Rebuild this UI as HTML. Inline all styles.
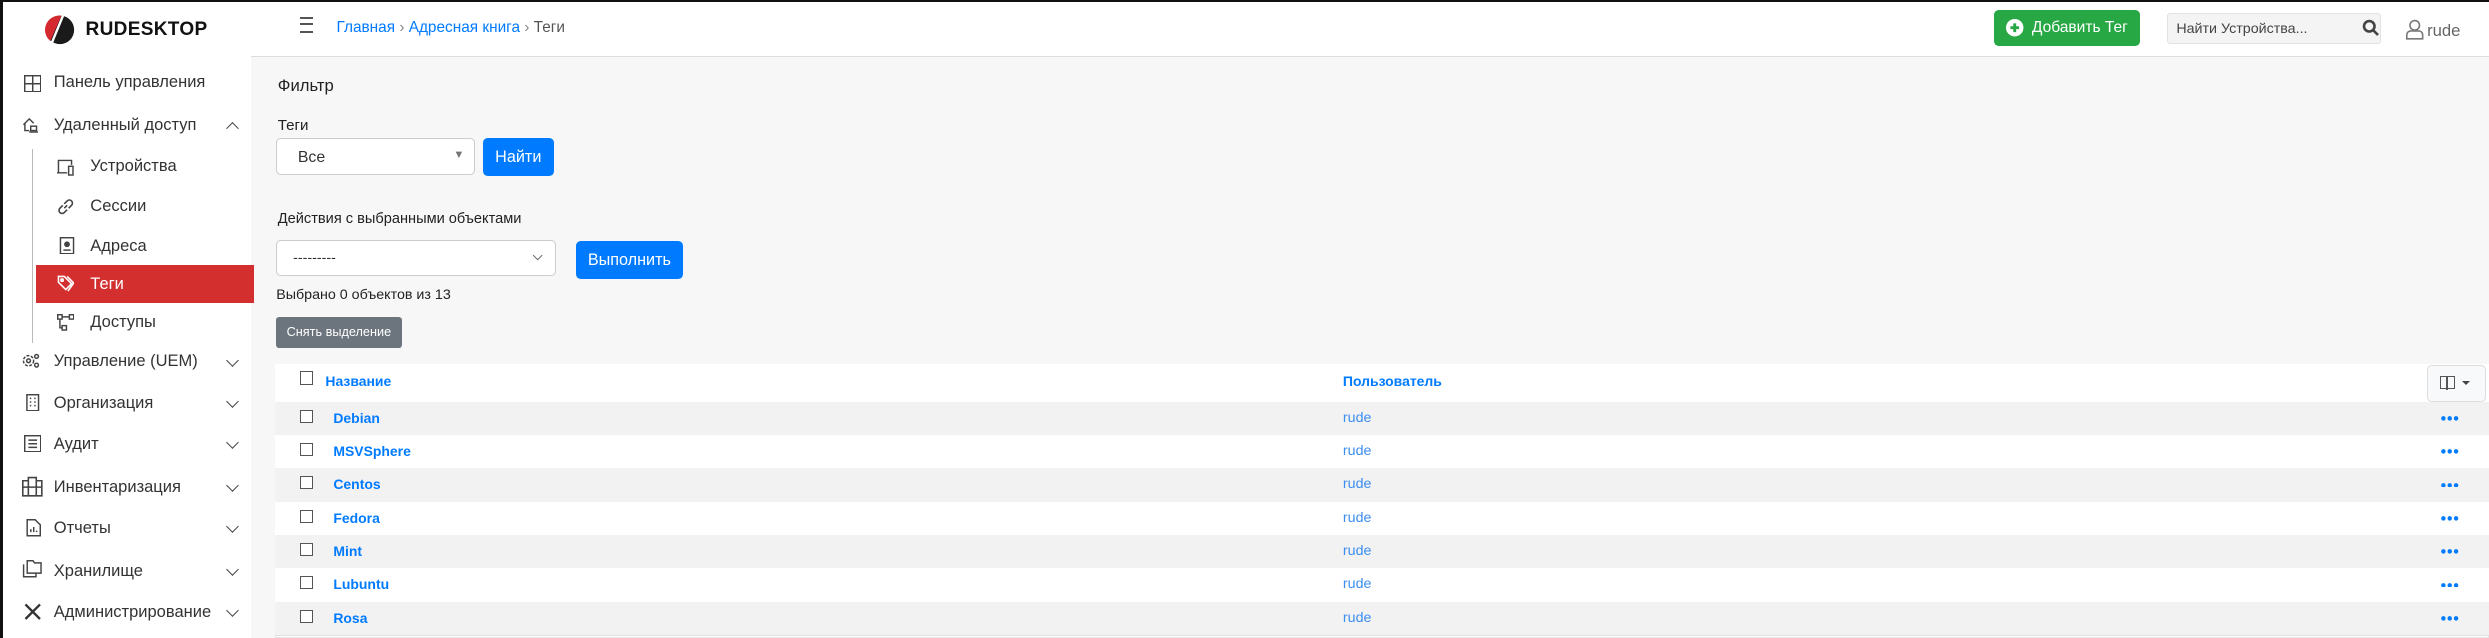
<!DOCTYPE html>
<html><head><meta charset="utf-8">
<style>
html,body{margin:0;padding:0;}
body{width:2489px;height:637px;overflow:hidden;background:#f7f7f7;font-family:"Liberation Sans","DejaVu Sans",sans-serif;}
#z{zoom:1.5874;width:1568px;height:402px;position:relative;overflow:hidden;background:#f7f7f7;}
.a{position:absolute;white-space:nowrap;}
#sb{position:absolute;left:0;top:0;width:158px;height:402px;background:#fff;border-left:2px solid #111;box-sizing:border-box;}
#top{position:absolute;left:158px;top:0;right:0;height:35px;background:#fff;border-bottom:1px solid #ddd;}
.ni{font-size:10.4px;color:#333;margin-top:1px;}
.ic{position:absolute;width:11px;height:11px;}
.chev{position:absolute;left:142px;width:5px;height:5px;border-right:1.2px solid #444;border-bottom:1.2px solid #444;transform:rotate(45deg);}
.chevu{transform:rotate(-135deg);}
.btnb{position:absolute;background:#007bff;color:#fff;border-radius:3px;font-size:10.2px;text-align:center;}
.sel{position:absolute;background:#fff;border:1px solid #ccc;border-radius:3px;font-size:10px;color:#333;box-sizing:border-box;}
.row{position:absolute;left:173px;width:1395px;height:21px;border-bottom:1px solid #e0e0e0;}
.cb{position:absolute;left:16px;top:5px;width:7px;height:7px;border:1px solid #555;background:#fff;}
.nm{position:absolute;left:37px;top:5px;font-size:8.8px;font-weight:bold;color:#007bff;}
.us{position:absolute;left:673px;top:5px;font-size:9px;color:#3b8ef0;}
.dots{position:absolute;left:1365px;top:9px;width:11px;height:3px;}
</style></head><body><div id="z">
<div style="position:absolute;left:0;top:0;width:1568px;height:1px;background:#111;z-index:5"></div>
<div id="sb">
 <svg class="a" style="left:26px;top:9px" width="20" height="20" viewBox="0 0 20 20"><circle cx="10" cy="10" r="9" fill="#1a1a1a"/><path d="M10 1A9 9 0 0 0 4 17L11 1Z" fill="#d42a2f"/><path d="M12 1L5 18" stroke="#fff" stroke-width="1.5"/></svg>
 <div class="a" style="left:52px;top:12px;font-size:12px;font-weight:bold;color:#111;letter-spacing:0.2px">RUDESKTOP</div>

 <svg class="ic" style="left:13px;top:47px" viewBox="0 0 12 12" fill="none" stroke="#444" stroke-width="1"><rect x="0.5" y="0.5" width="11" height="11"/><path d="M6 0.5V11.5M0.5 6H11.5"/></svg>
 <div class="a ni" style="left:32px;top:45px">Панель управления</div>
 <svg class="ic" style="left:12px;top:73px" viewBox="0 0 12 12" fill="none" stroke="#444" stroke-width="1"><path d="M1 6L5 2L8 5M2 5V10H5"/><rect x="6" y="7" width="4" height="3"/><path d="M5 11H11"/></svg>
 <div class="a ni" style="left:32px;top:72px">Удаленный доступ</div>
 <div class="chev chevu" style="top:78px"></div>
 <div style="position:absolute;left:18px;top:94px;width:1px;height:122px;background:#bbb"></div>

 <svg class="ic" style="left:34px;top:100px" viewBox="0 0 12 12" fill="none" stroke="#444" stroke-width="1"><path d="M1 9V1H10V4M0 9.5H7"/><rect x="8" y="5" width="3" height="6"/></svg>
 <div class="a ni" style="left:55px;top:98px">Устройства</div>
 <svg class="ic" style="left:34px;top:125px" viewBox="0 0 12 12" fill="none" stroke="#444" stroke-width="1.1"><path d="M5 7L7 5M4 5L2 7A2 2 0 0 0 5 10L7 8M8 7L10 5A2 2 0 0 0 7 2L5 4"/></svg>
 <div class="a ni" style="left:55px;top:123px">Сессии</div>
 <svg class="ic" style="left:35px;top:149px" viewBox="0 0 12 12" fill="none" stroke="#444" stroke-width="1"><rect x="1" y="0.5" width="9" height="11"/><circle cx="5.5" cy="5" r="1.5" fill="#444"/><path d="M3 9H8"/></svg>
 <div class="a ni" style="left:55px;top:148px">Адреса</div>
 <div style="position:absolute;left:21px;top:167px;width:137px;height:24px;background:#d32f2f"></div>
 <svg class="ic" style="left:34px;top:173px" viewBox="0 0 12 12" fill="none" stroke="#fff" stroke-width="1.1"><path d="M1 1H5L10 6L6 10L1 5Z"/><circle cx="3.5" cy="3.5" r="0.8"/><path d="M7 1L11.5 5.5L7.5 11"/></svg>
 <div class="a ni" style="left:55px;top:172px;color:#fff">Теги</div>
 <svg class="ic" style="left:34px;top:198px" viewBox="0 0 12 12" fill="none" stroke="#444" stroke-width="1"><rect x="0.5" y="0.5" width="3" height="3"/><rect x="8.5" y="0.5" width="3" height="3"/><rect x="3.5" y="8" width="3" height="3"/><path d="M2 3.5V9.5H3.5M3.5 2H8.5"/></svg>
 <div class="a ni" style="left:55px;top:196px">Доступы</div>

 <svg class="ic" style="left:12px;top:222px" viewBox="0 0 12 12" fill="none" stroke="#444" stroke-width="1"><circle cx="4.5" cy="6" r="3.5" stroke-dasharray="2 1"/><circle cx="4.5" cy="6" r="1.3"/><circle cx="10" cy="3" r="1.3"/><circle cx="10" cy="9" r="1.3"/></svg>
 <div class="a ni" style="left:32px;top:221px">Управление (UEM)</div><div class="chev" style="top:224px"></div>
 <svg class="ic" style="left:13px;top:248px" viewBox="0 0 12 12" fill="none" stroke="#444" stroke-width="1"><rect x="2" y="0.5" width="8" height="11"/><path d="M4 3H5M7 3H8M4 5.5H5M7 5.5H8M4 8H5M7 8H8"/></svg>
 <div class="a ni" style="left:32px;top:247px">Организация</div><div class="chev" style="top:250px"></div>
 <svg class="ic" style="left:13px;top:274px" viewBox="0 0 12 12" fill="none" stroke="#444" stroke-width="1"><rect x="0.5" y="0.5" width="11" height="11"/><path d="M3 3.5H9M3 6H9M3 8.5H9"/></svg>
 <div class="a ni" style="left:32px;top:273px">Аудит</div><div class="chev" style="top:276px"></div>
 <svg class="ic" style="left:12px;top:300px;width:13px;height:13px" viewBox="0 0 13 13" fill="none" stroke="#444" stroke-width="1"><path d="M0.5 12.5V3H4V1H9V3H12.5V12.5ZM0.5 7H12.5M4 3V12.5M9 3V12.5"/></svg>
 <div class="a ni" style="left:32px;top:300px">Инвентаризация</div><div class="chev" style="top:303px"></div>
 <svg class="ic" style="left:14px;top:327px" viewBox="0 0 12 12" fill="none" stroke="#444" stroke-width="1"><path d="M1.5 0.5H7L10.5 4V11.5H1.5Z"/><path d="M4 9V7M6 9V5.5M8 9V8"/></svg>
 <div class="a ni" style="left:32px;top:326px">Отчеты</div><div class="chev" style="top:329px"></div>
 <svg class="ic" style="left:12px;top:353px;width:13px" viewBox="0 0 13 12" fill="none" stroke="#444" stroke-width="1"><path d="M0.5 3V11.5H9V9M3 0.5H7L8 2H12.5V9H3Z"/></svg>
 <div class="a ni" style="left:32px;top:353px">Хранилище</div><div class="chev" style="top:356px"></div>
 <svg class="ic" style="left:13px;top:380px" viewBox="0 0 12 12" fill="none" stroke="#333" stroke-width="1.6"><path d="M1 1L11 11M11 1L1 11"/></svg>
 <div class="a ni" style="left:32px;top:379px">Администрирование</div><div class="chev" style="top:382px"></div>
</div>

<div id="top">
 <div class="a" style="left:31px;top:11px;width:8px;height:7px;border-top:1.5px solid #555;border-bottom:1.5px solid #555"></div>
 <div class="a" style="left:31px;top:14.5px;width:8px;height:1.5px;background:#555"></div>
 <div class="a" style="left:54px;top:12px;font-size:9.7px;color:#007bff">Главная <span style="color:#888">›</span> Адресная книга <span style="color:#888">›</span> <span style="color:#555">Теги</span></div>
 <div class="a" style="left:1098px;top:6px;width:92px;height:23px;background:#28a745;border-radius:3px"></div>
 <svg class="a" style="left:1106px;top:12px" width="11" height="11" viewBox="0 0 12 12"><circle cx="6" cy="6" r="6" fill="#fff"/><path d="M6 3V9M3 6H9" stroke="#28a745" stroke-width="2"/></svg>
 <div class="a" style="left:1122px;top:12px;font-size:9.8px;color:#fff">Добавить Тег</div>
 <div class="a" style="left:1207px;top:8px;width:135px;height:20px;background:#f4f4f4;border:1px solid #e2e2e2;border-radius:2px;box-sizing:border-box"></div>
 <div class="a" style="left:1213px;top:13px;font-size:9px;color:#444">Найти Устройства...</div>
 <svg class="a" style="left:1330px;top:12px" width="11" height="11" viewBox="0 0 12 12" fill="none" stroke="#444" stroke-width="1.8"><circle cx="5" cy="5" r="3.6"/><path d="M7.6 7.6L11 11"/></svg>
 <svg class="a" style="left:1358px;top:12px" width="11" height="13" viewBox="0 0 11 13" fill="none" stroke="#777" stroke-width="1"><circle cx="5.5" cy="4" r="3"/><path d="M0.5 12.5V10A2.5 2.5 0 0 1 3 7.5H8A2.5 2.5 0 0 1 10.5 10V12.5Z"/></svg>
 <div class="a" style="left:1371px;top:13px;font-size:10.5px;color:#666">rude</div>
</div>

<div class="a" style="left:175px;top:48px;font-size:10.5px;color:#222">Фильтр</div>
<div class="a" style="left:175px;top:74px;font-size:9.5px;color:#222">Теги</div>
<div class="sel" style="left:174px;top:87px;width:125px;height:23px"><span class="a" style="left:13px;top:6px">Все</span><span class="a" style="left:111px;top:6px;font-size:7px;color:#777">▼</span></div>
<div class="btnb" style="left:304px;top:87px;width:45px;height:24px;line-height:24px">Найти</div>
<div class="a" style="left:175px;top:133px;font-size:9.2px;color:#222">Действия с выбранными объектами</div>
<div class="sel" style="left:174px;top:151px;width:176px;height:23px"><span class="a" style="left:10px;top:6px;font-size:9px">---------</span><span class="a" style="left:162px;top:7px;width:4px;height:4px;border-right:1px solid #666;border-bottom:1px solid #666;transform:rotate(45deg)"></span></div>
<div class="btnb" style="left:363px;top:152px;width:67px;height:24px;line-height:24px">Выполнить</div>
<div class="a" style="left:174px;top:181px;font-size:9px;color:#222">Выбрано 0 объектов из 13</div>
<div class="a" style="left:174px;top:200px;width:79px;height:19px;background:#6c757d;border-radius:2px;color:#fff;font-size:8px;text-align:center;line-height:19px">Снять выделение</div>

<div class="a" style="left:173px;top:229px;width:1395px;height:173px;background:#fff;border:1px solid #e4e4e4;border-radius:3px 0 0 0;box-sizing:border-box"></div>
<div class="row" style="top:229px;height:24px;background:#fff">
 <div class="cb" style="top:5px"></div>
 <div class="a" style="left:32px;top:6px;font-size:8.8px;font-weight:bold;color:#007bff">Название</div>
 <div class="a" style="left:673px;top:6px;font-size:8.8px;font-weight:bold;color:#007bff">Пользователь</div>
 <div class="a" style="left:1356px;top:1px;width:37px;height:23px;background:#f8f9fa;border:1px solid #ddd;border-radius:3px;box-sizing:border-box"></div>
 <div class="a" style="left:1364px;top:8px;width:8px;height:7px;border:1px solid #555;"></div>
 <div class="a" style="left:1368px;top:8px;width:1px;height:9px;background:#555"></div>
 <div class="a" style="left:1378px;top:11px;width:0;height:0;border-left:3px solid transparent;border-right:3px solid transparent;border-top:3px solid #444"></div>
</div>
<div class="row" style="top:253px;background:#f2f2f2"><div class="cb"></div><div class="nm">Debian</div><div class="us">rude</div><svg class="dots" viewBox="0 0 11 3"><circle cx="1.5" cy="1.5" r="1.4" fill="#007bff"/><circle cx="5.5" cy="1.5" r="1.4" fill="#007bff"/><circle cx="9.5" cy="1.5" r="1.4" fill="#007bff"/></svg></div>
<div class="row" style="top:274px;background:#fff"><div class="cb"></div><div class="nm">MSVSphere</div><div class="us">rude</div><svg class="dots" viewBox="0 0 11 3"><circle cx="1.5" cy="1.5" r="1.4" fill="#007bff"/><circle cx="5.5" cy="1.5" r="1.4" fill="#007bff"/><circle cx="9.5" cy="1.5" r="1.4" fill="#007bff"/></svg></div>
<div class="row" style="top:295px;background:#f2f2f2"><div class="cb"></div><div class="nm">Centos</div><div class="us">rude</div><svg class="dots" viewBox="0 0 11 3"><circle cx="1.5" cy="1.5" r="1.4" fill="#007bff"/><circle cx="5.5" cy="1.5" r="1.4" fill="#007bff"/><circle cx="9.5" cy="1.5" r="1.4" fill="#007bff"/></svg></div>
<div class="row" style="top:316px;background:#fff"><div class="cb"></div><div class="nm">Fedora</div><div class="us">rude</div><svg class="dots" viewBox="0 0 11 3"><circle cx="1.5" cy="1.5" r="1.4" fill="#007bff"/><circle cx="5.5" cy="1.5" r="1.4" fill="#007bff"/><circle cx="9.5" cy="1.5" r="1.4" fill="#007bff"/></svg></div>
<div class="row" style="top:337px;background:#f2f2f2"><div class="cb"></div><div class="nm">Mint</div><div class="us">rude</div><svg class="dots" viewBox="0 0 11 3"><circle cx="1.5" cy="1.5" r="1.4" fill="#007bff"/><circle cx="5.5" cy="1.5" r="1.4" fill="#007bff"/><circle cx="9.5" cy="1.5" r="1.4" fill="#007bff"/></svg></div>
<div class="row" style="top:358px;background:#fff"><div class="cb"></div><div class="nm">Lubuntu</div><div class="us">rude</div><svg class="dots" viewBox="0 0 11 3"><circle cx="1.5" cy="1.5" r="1.4" fill="#007bff"/><circle cx="5.5" cy="1.5" r="1.4" fill="#007bff"/><circle cx="9.5" cy="1.5" r="1.4" fill="#007bff"/></svg></div>
<div class="row" style="top:379px;background:#f2f2f2"><div class="cb"></div><div class="nm">Rosa</div><div class="us">rude</div><svg class="dots" viewBox="0 0 11 3"><circle cx="1.5" cy="1.5" r="1.4" fill="#007bff"/><circle cx="5.5" cy="1.5" r="1.4" fill="#007bff"/><circle cx="9.5" cy="1.5" r="1.4" fill="#007bff"/></svg></div>
</div></body></html>
